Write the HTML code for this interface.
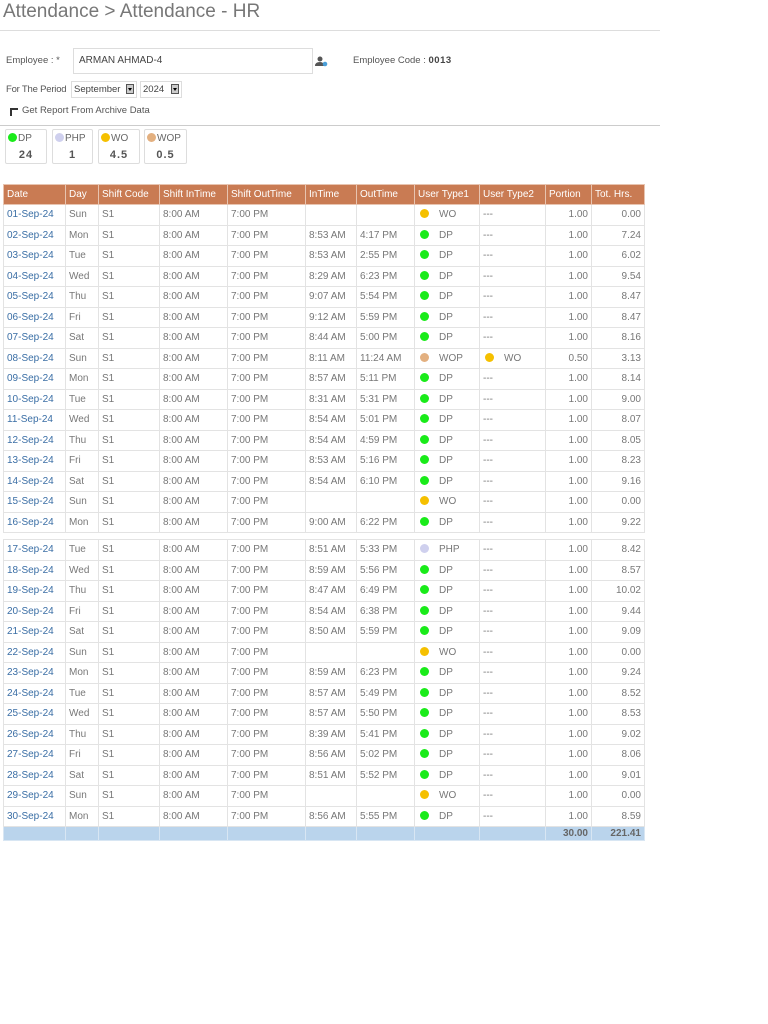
<!DOCTYPE html>
<html><head><meta charset="utf-8">
<style>
body{margin:0;background:#fff;font-family:"Liberation Sans",sans-serif;color:#555;width:768px;height:1024px;position:relative;overflow:hidden}
.a{position:absolute}
h1{position:absolute;left:3px;top:1px;margin:0;font-weight:normal;font-size:19px;color:#777}
.hr{position:absolute;left:0;width:660px;height:1px;background:#ddd}
.lbl{font-size:9.5px;color:#555}
.inp{border:1px solid #ddd;background:#fff}
.sel{border:1px solid #ddd;font-size:9.5px;color:#444;height:15px;line-height:15px;padding-left:2px}
.arr{position:absolute;right:2px;top:2px;width:8px;height:10px;background:#ccc;border:1px solid #555;box-sizing:border-box}
.arr:after{content:"";position:absolute;left:1px;top:3px;border:2.5px solid transparent;border-top:3px solid #000}
.box{position:absolute;top:129px;height:33px;border:1px solid #ddd;border-radius:2px;font-size:10px;color:#666}
.box .v{position:absolute;top:19px;left:0;right:0;text-align:center;font-weight:bold;font-size:11px;color:#555;letter-spacing:1px}
.box .t{position:absolute;top:3px;left:2px}
.dt{display:inline-block;width:9px;height:9px;border-radius:50%;vertical-align:-1px;margin-right:1px}
table{position:absolute;left:3px;border-collapse:collapse;table-layout:fixed;width:641px;font-size:10px;color:#777}
td,th{border:1px solid #e3e3e3;padding:0 3px;white-space:nowrap;overflow:hidden;height:19.5px}
th{background:#c97b53;color:#fff;font-weight:normal;text-align:left;border-color:#e8c4b0;height:19px}
td.d{color:#3a6ea5}
td.r{text-align:right}
.g{background:#1aeb1a}.y{background:#f5c000}.p{background:#cfd0ee}.o{background:#e3b080}
td .dt{margin:0 10px 0 2px}
tr.tot td{background:#bad4ec;font-weight:bold;color:#666;border-color:#d8e6f3;height:13px;line-height:13px;font-size:10px}
</style></head><body>
<h1>Attendance &gt; Attendance - HR</h1>
<div class="hr" style="top:30px"></div>
<div class="a lbl" style="left:6px;top:55px">Employee : *</div>
<div class="a inp" style="left:73px;top:48px;width:238px;height:24px"></div>
<div class="a" style="left:79px;top:55px;font-size:10px;color:#444">ARMAN AHMAD-4</div>
<svg class="a" style="left:315px;top:56px" width="13" height="11" viewBox="0 0 13 11"><circle cx="5" cy="3" r="2.5" fill="#555"/><path d="M0 10 Q0 6 5 6 Q9 6 9 10Z" fill="#555"/><circle cx="10" cy="8" r="2.3" fill="#4a9fd8"/></svg>
<div class="a lbl" style="left:353px;top:55px">Employee Code : <b style="color:#444;letter-spacing:.5px">0013</b></div>
<div class="a lbl" style="left:6px;top:84px;letter-spacing:-0.2px">For The Period</div>
<div class="a sel" style="left:71px;top:81px;width:62px">September<span class="arr"></span></div>
<div class="a sel" style="left:140px;top:81px;width:38px">2024<span class="arr"></span></div>
<div class="a" style="left:10px;top:108px;width:6px;height:6px;border-left:2px solid #333;border-top:2px solid #333"></div>
<div class="a lbl" style="left:22px;top:105px">Get Report From Archive Data</div>
<div class="hr" style="top:125px;background:#ccc"></div>
<div class="box" style="left:5px;width:40px"><span class="t"><span class="dt g"></span>DP</span><span class="v">24</span></div>
<div class="box" style="left:52px;width:39px"><span class="t"><span class="dt p"></span>PHP</span><span class="v">1</span></div>
<div class="box" style="left:98px;width:40px"><span class="t"><span class="dt y"></span>WO</span><span class="v">4.5</span></div>
<div class="box" style="left:144px;width:41px"><span class="t"><span class="dt o"></span>WOP</span><span class="v">0.5</span></div>

<table style="top:184px">
<colgroup><col style="width:62px"><col style="width:33px"><col style="width:61px"><col style="width:68px"><col style="width:78px"><col style="width:51px"><col style="width:58px"><col style="width:65px"><col style="width:66px"><col style="width:46px"><col style="width:53px"></colgroup>
<tr><th>Date</th><th>Day</th><th>Shift Code</th><th>Shift InTime</th><th>Shift OutTime</th><th>InTime</th><th>OutTime</th><th>User Type1</th><th>User Type2</th><th>Portion</th><th>Tot. Hrs.</th></tr>
<tr><td class="d">01-Sep-24</td><td>Sun</td><td>S1</td><td>8:00 AM</td><td>7:00 PM</td><td></td><td></td><td><span class="dt y"></span>WO</td><td>---</td><td class="r">1.00</td><td class="r">0.00</td></tr>
<tr><td class="d">02-Sep-24</td><td>Mon</td><td>S1</td><td>8:00 AM</td><td>7:00 PM</td><td>8:53 AM</td><td>4:17 PM</td><td><span class="dt g"></span>DP</td><td>---</td><td class="r">1.00</td><td class="r">7.24</td></tr>
<tr><td class="d">03-Sep-24</td><td>Tue</td><td>S1</td><td>8:00 AM</td><td>7:00 PM</td><td>8:53 AM</td><td>2:55 PM</td><td><span class="dt g"></span>DP</td><td>---</td><td class="r">1.00</td><td class="r">6.02</td></tr>
<tr><td class="d">04-Sep-24</td><td>Wed</td><td>S1</td><td>8:00 AM</td><td>7:00 PM</td><td>8:29 AM</td><td>6:23 PM</td><td><span class="dt g"></span>DP</td><td>---</td><td class="r">1.00</td><td class="r">9.54</td></tr>
<tr><td class="d">05-Sep-24</td><td>Thu</td><td>S1</td><td>8:00 AM</td><td>7:00 PM</td><td>9:07 AM</td><td>5:54 PM</td><td><span class="dt g"></span>DP</td><td>---</td><td class="r">1.00</td><td class="r">8.47</td></tr>
<tr><td class="d">06-Sep-24</td><td>Fri</td><td>S1</td><td>8:00 AM</td><td>7:00 PM</td><td>9:12 AM</td><td>5:59 PM</td><td><span class="dt g"></span>DP</td><td>---</td><td class="r">1.00</td><td class="r">8.47</td></tr>
<tr><td class="d">07-Sep-24</td><td>Sat</td><td>S1</td><td>8:00 AM</td><td>7:00 PM</td><td>8:44 AM</td><td>5:00 PM</td><td><span class="dt g"></span>DP</td><td>---</td><td class="r">1.00</td><td class="r">8.16</td></tr>
<tr><td class="d">08-Sep-24</td><td>Sun</td><td>S1</td><td>8:00 AM</td><td>7:00 PM</td><td>8:11 AM</td><td>11:24 AM</td><td><span class="dt o"></span>WOP</td><td><span class="dt y"></span>WO</td><td class="r">0.50</td><td class="r">3.13</td></tr>
<tr><td class="d">09-Sep-24</td><td>Mon</td><td>S1</td><td>8:00 AM</td><td>7:00 PM</td><td>8:57 AM</td><td>5:11 PM</td><td><span class="dt g"></span>DP</td><td>---</td><td class="r">1.00</td><td class="r">8.14</td></tr>
<tr><td class="d">10-Sep-24</td><td>Tue</td><td>S1</td><td>8:00 AM</td><td>7:00 PM</td><td>8:31 AM</td><td>5:31 PM</td><td><span class="dt g"></span>DP</td><td>---</td><td class="r">1.00</td><td class="r">9.00</td></tr>
<tr><td class="d">11-Sep-24</td><td>Wed</td><td>S1</td><td>8:00 AM</td><td>7:00 PM</td><td>8:54 AM</td><td>5:01 PM</td><td><span class="dt g"></span>DP</td><td>---</td><td class="r">1.00</td><td class="r">8.07</td></tr>
<tr><td class="d">12-Sep-24</td><td>Thu</td><td>S1</td><td>8:00 AM</td><td>7:00 PM</td><td>8:54 AM</td><td>4:59 PM</td><td><span class="dt g"></span>DP</td><td>---</td><td class="r">1.00</td><td class="r">8.05</td></tr>
<tr><td class="d">13-Sep-24</td><td>Fri</td><td>S1</td><td>8:00 AM</td><td>7:00 PM</td><td>8:53 AM</td><td>5:16 PM</td><td><span class="dt g"></span>DP</td><td>---</td><td class="r">1.00</td><td class="r">8.23</td></tr>
<tr><td class="d">14-Sep-24</td><td>Sat</td><td>S1</td><td>8:00 AM</td><td>7:00 PM</td><td>8:54 AM</td><td>6:10 PM</td><td><span class="dt g"></span>DP</td><td>---</td><td class="r">1.00</td><td class="r">9.16</td></tr>
<tr><td class="d">15-Sep-24</td><td>Sun</td><td>S1</td><td>8:00 AM</td><td>7:00 PM</td><td></td><td></td><td><span class="dt y"></span>WO</td><td>---</td><td class="r">1.00</td><td class="r">0.00</td></tr>
<tr><td class="d">16-Sep-24</td><td>Mon</td><td>S1</td><td>8:00 AM</td><td>7:00 PM</td><td>9:00 AM</td><td>6:22 PM</td><td><span class="dt g"></span>DP</td><td>---</td><td class="r">1.00</td><td class="r">9.22</td></tr>
</table>

<table style="top:539px">
<colgroup><col style="width:62px"><col style="width:33px"><col style="width:61px"><col style="width:68px"><col style="width:78px"><col style="width:51px"><col style="width:58px"><col style="width:65px"><col style="width:66px"><col style="width:46px"><col style="width:53px"></colgroup>
<tr><td class="d">17-Sep-24</td><td>Tue</td><td>S1</td><td>8:00 AM</td><td>7:00 PM</td><td>8:51 AM</td><td>5:33 PM</td><td><span class="dt p"></span>PHP</td><td>---</td><td class="r">1.00</td><td class="r">8.42</td></tr>
<tr><td class="d">18-Sep-24</td><td>Wed</td><td>S1</td><td>8:00 AM</td><td>7:00 PM</td><td>8:59 AM</td><td>5:56 PM</td><td><span class="dt g"></span>DP</td><td>---</td><td class="r">1.00</td><td class="r">8.57</td></tr>
<tr><td class="d">19-Sep-24</td><td>Thu</td><td>S1</td><td>8:00 AM</td><td>7:00 PM</td><td>8:47 AM</td><td>6:49 PM</td><td><span class="dt g"></span>DP</td><td>---</td><td class="r">1.00</td><td class="r">10.02</td></tr>
<tr><td class="d">20-Sep-24</td><td>Fri</td><td>S1</td><td>8:00 AM</td><td>7:00 PM</td><td>8:54 AM</td><td>6:38 PM</td><td><span class="dt g"></span>DP</td><td>---</td><td class="r">1.00</td><td class="r">9.44</td></tr>
<tr><td class="d">21-Sep-24</td><td>Sat</td><td>S1</td><td>8:00 AM</td><td>7:00 PM</td><td>8:50 AM</td><td>5:59 PM</td><td><span class="dt g"></span>DP</td><td>---</td><td class="r">1.00</td><td class="r">9.09</td></tr>
<tr><td class="d">22-Sep-24</td><td>Sun</td><td>S1</td><td>8:00 AM</td><td>7:00 PM</td><td></td><td></td><td><span class="dt y"></span>WO</td><td>---</td><td class="r">1.00</td><td class="r">0.00</td></tr>
<tr><td class="d">23-Sep-24</td><td>Mon</td><td>S1</td><td>8:00 AM</td><td>7:00 PM</td><td>8:59 AM</td><td>6:23 PM</td><td><span class="dt g"></span>DP</td><td>---</td><td class="r">1.00</td><td class="r">9.24</td></tr>
<tr><td class="d">24-Sep-24</td><td>Tue</td><td>S1</td><td>8:00 AM</td><td>7:00 PM</td><td>8:57 AM</td><td>5:49 PM</td><td><span class="dt g"></span>DP</td><td>---</td><td class="r">1.00</td><td class="r">8.52</td></tr>
<tr><td class="d">25-Sep-24</td><td>Wed</td><td>S1</td><td>8:00 AM</td><td>7:00 PM</td><td>8:57 AM</td><td>5:50 PM</td><td><span class="dt g"></span>DP</td><td>---</td><td class="r">1.00</td><td class="r">8.53</td></tr>
<tr><td class="d">26-Sep-24</td><td>Thu</td><td>S1</td><td>8:00 AM</td><td>7:00 PM</td><td>8:39 AM</td><td>5:41 PM</td><td><span class="dt g"></span>DP</td><td>---</td><td class="r">1.00</td><td class="r">9.02</td></tr>
<tr><td class="d">27-Sep-24</td><td>Fri</td><td>S1</td><td>8:00 AM</td><td>7:00 PM</td><td>8:56 AM</td><td>5:02 PM</td><td><span class="dt g"></span>DP</td><td>---</td><td class="r">1.00</td><td class="r">8.06</td></tr>
<tr><td class="d">28-Sep-24</td><td>Sat</td><td>S1</td><td>8:00 AM</td><td>7:00 PM</td><td>8:51 AM</td><td>5:52 PM</td><td><span class="dt g"></span>DP</td><td>---</td><td class="r">1.00</td><td class="r">9.01</td></tr>
<tr><td class="d">29-Sep-24</td><td>Sun</td><td>S1</td><td>8:00 AM</td><td>7:00 PM</td><td></td><td></td><td><span class="dt y"></span>WO</td><td>---</td><td class="r">1.00</td><td class="r">0.00</td></tr>
<tr><td class="d">30-Sep-24</td><td>Mon</td><td>S1</td><td>8:00 AM</td><td>7:00 PM</td><td>8:56 AM</td><td>5:55 PM</td><td><span class="dt g"></span>DP</td><td>---</td><td class="r">1.00</td><td class="r">8.59</td></tr>
<tr class="tot"><td></td><td></td><td></td><td></td><td></td><td></td><td></td><td></td><td></td><td class="r">30.00</td><td class="r">221.41</td></tr>
</table>
</body></html>
